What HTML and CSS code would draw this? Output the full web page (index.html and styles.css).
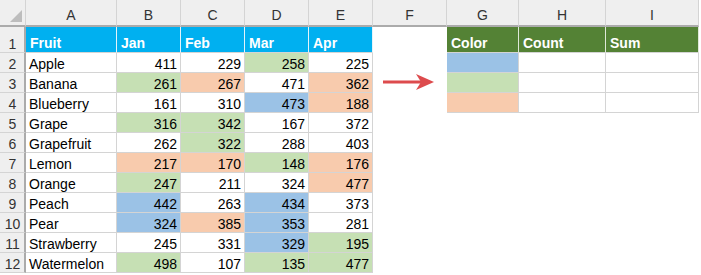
FILE: index.html
```html
<!DOCTYPE html>
<html>
<head>
<meta charset="utf-8">
<link rel="stylesheet" href="styles.css">
</head>
<body>
<div class="sheet">
  <div class="grid">
    <div class="corner"><span class="tri"></span></div>
    <div class="ch">A</div><div class="ch">B</div><div class="ch">C</div><div class="ch">D</div><div class="ch">E</div><div class="ch">F</div><div class="ch">G</div><div class="ch">H</div><div class="ch">I</div>

    <div class="rh">1</div>
    <div class="c hb">Fruit</div><div class="c hb">Jan</div><div class="c hb">Feb</div><div class="c hb">Mar</div><div class="c hb">Apr</div>
    <div class="e"></div>
    <div class="c hg">Color</div><div class="c hg">Count</div><div class="c hg">Sum</div>

    <div class="rh">2</div>
    <div class="c">Apple</div><div class="c n">411</div><div class="c n">229</div><div class="c n g">258</div><div class="c n">225</div>
    <div class="e"></div><div class="c b"></div><div class="c"></div><div class="c"></div>

    <div class="rh">3</div>
    <div class="c">Banana</div><div class="c n g">261</div><div class="c n o">267</div><div class="c n">471</div><div class="c n o">362</div>
    <div class="e"></div><div class="c g"></div><div class="c"></div><div class="c"></div>

    <div class="rh">4</div>
    <div class="c">Blueberry</div><div class="c n">161</div><div class="c n">310</div><div class="c n b">473</div><div class="c n o">188</div>
    <div class="e"></div><div class="c o"></div><div class="c"></div><div class="c"></div>

    <div class="rh">5</div>
    <div class="c">Grape</div><div class="c n g">316</div><div class="c n g">342</div><div class="c n">167</div><div class="c n">372</div>
    <div class="e"></div><div class="e"></div><div class="e"></div><div class="e"></div>

    <div class="rh">6</div>
    <div class="c">Grapefruit</div><div class="c n">262</div><div class="c n g">322</div><div class="c n">288</div><div class="c n">403</div>
    <div class="e"></div><div class="e"></div><div class="e"></div><div class="e"></div>

    <div class="rh">7</div>
    <div class="c">Lemon</div><div class="c n o">217</div><div class="c n o">170</div><div class="c n g">148</div><div class="c n o">176</div>
    <div class="e"></div><div class="e"></div><div class="e"></div><div class="e"></div>

    <div class="rh">8</div>
    <div class="c">Orange</div><div class="c n g">247</div><div class="c n">211</div><div class="c n">324</div><div class="c n o">477</div>
    <div class="e"></div><div class="e"></div><div class="e"></div><div class="e"></div>

    <div class="rh">9</div>
    <div class="c">Peach</div><div class="c n b">442</div><div class="c n">263</div><div class="c n b">434</div><div class="c n">373</div>
    <div class="e"></div><div class="e"></div><div class="e"></div><div class="e"></div>

    <div class="rh">10</div>
    <div class="c">Pear</div><div class="c n b">324</div><div class="c n o">385</div><div class="c n b">353</div><div class="c n">281</div>
    <div class="e"></div><div class="e"></div><div class="e"></div><div class="e"></div>

    <div class="rh">11</div>
    <div class="c">Strawberry</div><div class="c n">245</div><div class="c n">331</div><div class="c n b">329</div><div class="c n g">195</div>
    <div class="e"></div><div class="e"></div><div class="e"></div><div class="e"></div>

    <div class="rh">12</div>
    <div class="c">Watermelon</div><div class="c n g">498</div><div class="c n">107</div><div class="c n g">135</div><div class="c n g">477</div>
    <div class="e"></div><div class="e"></div><div class="e"></div><div class="e"></div>
  </div>
  <svg class="arrow" width="52" height="18" viewBox="0 0 52 18">
    <line x1="0" y1="9" x2="40" y2="9" stroke="#DD4B4D" stroke-width="3"/>
    <polygon points="33,1 51,9 33,17 38,9" fill="#DD4B4D"/>
  </svg>
</div>
</body>
</html>
```

FILE: styles.css
```css
* { box-sizing: border-box; }
html, body { margin: 0; padding: 0; background: #fff; }
body {
  font-family: "Liberation Sans", Arial, sans-serif;
  font-size: 14px;
  color: #000;
}
.sheet { position: relative; width: 701px; height: 275px; overflow: hidden; }
.grid {
  display: grid;
  grid-template-columns: 26px 91px 64px 64px 64px 64px 74px 72px 87px 93px;
  grid-template-rows: 27px 26px repeat(11, 20px);
}
.corner {
  position: relative;
  background: #efefef;
  border-right: 1px solid #d4d4d4;
  border-bottom: 2px solid #ababab;
}
.tri {
  position: absolute;
  right: 3px;
  bottom: 3px;
  width: 12px;
  height: 12px;
  background: #bdbdbd;
  clip-path: polygon(100% 0, 100% 100%, 0 100%);
}
.ch {
  background: #efefef;
  border-right: 1px solid #d4d4d4;
  border-bottom: 2px solid #ababab;
  display: flex;
  align-items: center;
  justify-content: center;
  color: #333;
  font-size: 14px;
  padding-top: 5px;
}
.rh {
  background: #efefef;
  border-right: 2px solid #ababab;
  border-bottom: 1px solid #d4d4d4;
  display: flex;
  align-items: flex-end;
  justify-content: center;
  color: #333;
  line-height: 16px;
  padding-left: 1px;
}
.c {
  border-right: 1px solid #d4d4d4;
  border-bottom: 1px solid #d4d4d4;
  display: flex;
  align-items: flex-end;
  padding: 0 3px 0 3px;
  line-height: 16px;
  white-space: nowrap;
}
.n { justify-content: flex-end; }
.hb {
  background: #00b0f0;
  color: #fff;
  font-weight: bold;
  border-right-color: #e3f3fa;
  padding-left: 4px;
  padding-bottom: 1px;
}
.hg {
  background: #548235;
  color: #fff;
  font-weight: bold;
  border-right-color: #dfe8d8;
  padding-left: 4px;
  padding-bottom: 1px;
}
.b { background: #9bc2e6; }
.g { background: #c6e0b4; }
.o { background: #f8cbad; }
.e { background: #fff; }
.arrow { position: absolute; left: 383px; top: 73px; }
```
